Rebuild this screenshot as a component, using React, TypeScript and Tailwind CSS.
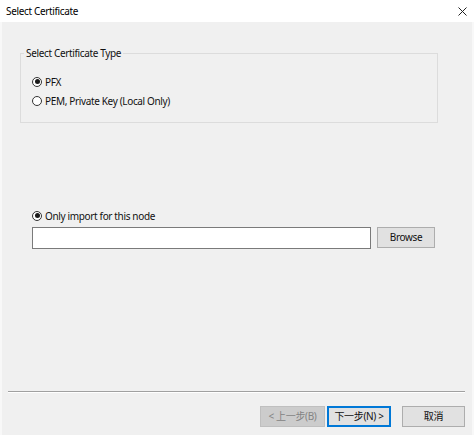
import React from 'react';

const font = { fontFamily: '"Noto Sans", "Noto Sans CJK SC", sans-serif', letterSpacing: '-0.35px' };

function Radio({ checked, label }: { checked: boolean; label: string }) {
  return (
    <div className="flex h-[19px] items-center gap-[3px]">
      <span className="flex h-[10px] w-[10px] items-center justify-center rounded-full border border-[#333333] bg-white">
        {checked && <span className="h-[5px] w-[5px] rounded-full bg-[#1a1a1a]" />}
      </span>
      <span className="text-[10px] leading-[14px] text-[#111111]">{label}</span>
    </div>
  );
}

export default function App() {
  return (
    <div className="flex h-[435px] w-[474px] flex-col bg-[#f0f0f0]" style={font}>
      <div className="flex h-[22px] shrink-0 items-center justify-between bg-white pl-[6px] pr-[6px]">
        <span className="text-[10px] leading-[14px] text-black">Select Certificate</span>
        <svg width="9" height="9" viewBox="0 0 9 9" className="mr-[1px]">
          <path d="M0.5 0.5 L8.5 8.5 M8.5 0.5 L0.5 8.5" stroke="#222222" strokeWidth="1" />
        </svg>
      </div>

      <div className="flex flex-1 flex-col border-x-2 border-[#f8f8f8]">
        <fieldset className="ml-[18px] mt-[24px] w-[418px] border border-[#dcdcdc] pb-[12px] pt-[12px]">
          <legend className="ml-[3px] px-[2px] text-[10px] leading-[14px] text-[#111111]">
            Select Certificate Type
          </legend>
          <div className="pl-[11px]">
            <Radio checked label="PFX" />
            <Radio checked={false} label="PEM, Private Key (Local Only)" />
          </div>
        </fieldset>

        <div className="ml-[30px] mt-[83px]">
          <Radio checked label="Only import for this node" />
        </div>

        <div className="ml-[30px] mt-[2px] flex items-start gap-[6px]">
          <input
            className="h-[22px] w-[339px] border border-[#7a7a7a] bg-white px-[3px] text-[10px] outline-none"
            style={font}
          />
          <button className="h-[21px] w-[58px] border border-[#adadad] bg-[#e1e1e1] text-[10px] text-[#111111]" style={font}>
            Browse
          </button>
        </div>

        <div className="mt-auto">
          <div className="ml-[6px] mr-[7px] h-[2px] border-t border-b border-t-[#a0a0a0] border-b-[#ffffff]" />
          <div className="mb-[8px] mt-[13px] flex justify-end pr-[7px]">
            <button
              disabled
              className="h-[21px] w-[65px] border border-[#bfbfbf] bg-[#cccccc] text-[10px] text-[#838383]"
              style={font}
            >
              &lt; 上一步(B)
            </button>
            <button
              className="ml-[2px] h-[21px] w-[64px] border-2 border-[#0078d7] bg-[#e1e1e1] text-[10px] text-[#111111]"
              style={font}
            >
              下一步(N) &gt;
            </button>
            <button
              className="ml-[11px] h-[21px] w-[63px] border border-[#adadad] bg-[#e1e1e1] text-[10px] text-[#111111]"
              style={font}
            >
              取消
            </button>
          </div>
        </div>
      </div>
    </div>
  );
}
